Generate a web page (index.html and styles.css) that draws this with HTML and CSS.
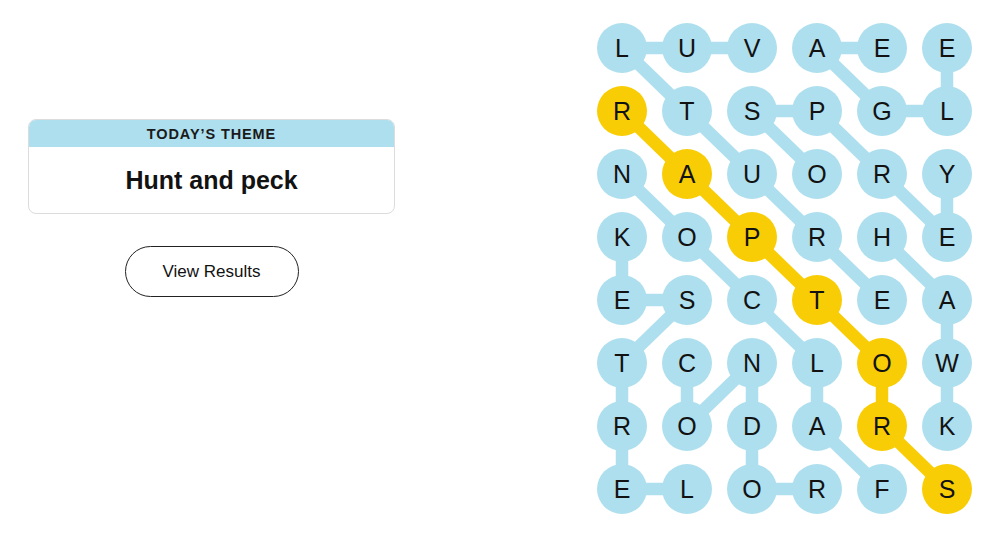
FILE: index.html
```html
<!DOCTYPE html>
<html lang="en">
<head>
    <meta charset="UTF-8">
    <meta name="viewport" content="width=device-width, initial-scale=1.0">
    <title>Strands</title>
    <link rel="stylesheet" href="styles.css">
</head>
<body>
    <div class="page">
        <div class="side">
            <div class="theme-card">
                <div class="theme-head">TODAY&rsquo;S THEME</div>
                <div class="theme-body">Hunt and peck</div>
            </div>
            <button class="results-btn">View Results</button>
        </div>

        <svg id="board" class="board" width="375" height="491" viewBox="0 0 375 491"></svg>
    </div>

    <script>
        const letters = [
            'LUVAEE',
            'RTSPGL',
            'NAUORY',
            'KOPRHE',
            'ESCTEA',
            'TCNLOW',
            'RODARK',
            'ELORFS'
        ];

        // found words as paths of [row, col]
        const words = [
            { cells: [[0,2],[0,1],[0,0],[1,1],[2,2],[3,3],[4,4]] },
            { cells: [[0,4],[0,3],[1,4],[1,5],[0,5]] },
            { cells: [[2,3],[1,2],[1,3],[2,4],[3,5],[2,5]] },
            { cells: [[3,4],[4,5],[5,5],[6,5]] },
            { cells: [[7,4],[6,3],[5,3],[4,2],[3,1],[2,0]] },
            { cells: [[3,0],[4,0],[4,1],[5,0],[6,0],[7,0],[7,1]] },
            { cells: [[5,1],[6,1],[5,2],[6,2],[7,2],[7,3]] },
            { cells: [[1,0],[2,1],[3,2],[4,3],[5,4],[6,4],[7,5]], spangram: true }
        ];

        const svg = document.getElementById('board');
        const ns = 'http://www.w3.org/2000/svg';
        const cx = c => 25 + c * 65;
        const cy = r => 25 + r * 63;
        const spanCells = {};

        words.forEach(word => {
            for (let i = 1; i < word.cells.length; i++) {
                const [r1, c1] = word.cells[i - 1];
                const [r2, c2] = word.cells[i];
                const line = document.createElementNS(ns, 'line');
                line.setAttribute('x1', cx(c1));
                line.setAttribute('y1', cy(r1));
                line.setAttribute('x2', cx(c2));
                line.setAttribute('y2', cy(r2));
                line.setAttribute('class', word.spangram ? 'link span' : 'link');
                svg.appendChild(line);
            }
            if (word.spangram) {
                word.cells.forEach(([r, c]) => { spanCells[r + '-' + c] = true; });
            }
        });

        letters.forEach((row, r) => {
            row.split('').forEach((ch, c) => {
                const dot = document.createElementNS(ns, 'circle');
                dot.setAttribute('cx', cx(c));
                dot.setAttribute('cy', cy(r));
                dot.setAttribute('r', 25);
                dot.setAttribute('class', spanCells[r + '-' + c] ? 'dot span' : 'dot');
                svg.appendChild(dot);

                const txt = document.createElementNS(ns, 'text');
                txt.setAttribute('x', cx(c));
                txt.setAttribute('y', cy(r) + 9);
                txt.setAttribute('class', 'letter');
                txt.textContent = ch;
                svg.appendChild(txt);
            });
        });
    </script>
</body>
</html>
```

FILE: styles.css
```css
body {
    margin: 0;
    font-family: "Liberation Sans", Arial, sans-serif;
    background-color: #ffffff;
    color: #000;
}

.page {
    display: flex;
    align-items: flex-start;
    gap: 202px;
    padding: 23px 0 0 28px;
}

.side {
    width: 367px;
    padding-top: 96px;
    display: flex;
    flex-direction: column;
    align-items: center;
}

.theme-card {
    width: 100%;
    box-sizing: border-box;
    border: 1px solid #dcdcdc;
    border-radius: 8px;
    overflow: hidden;
}

.theme-head {
    height: 27px;
    line-height: 28px;
    background-color: #aedfee;
    text-align: center;
    font-size: 14.5px;
    font-weight: bold;
    letter-spacing: 0.9px;
    color: #1a1a1a;
}

.theme-body {
    height: 66px;
    line-height: 66px;
    text-align: center;
    font-size: 25px;
    font-weight: bold;
    color: #121212;
}

.results-btn {
    margin-top: 32px;
    width: 174px;
    height: 51px;
    border: 1px solid #222;
    border-radius: 26px;
    background-color: #fff;
    font-family: "Liberation Sans", Arial, sans-serif;
    font-size: 17px;
    color: #121212;
    cursor: pointer;
}

.board {
    display: block;
    flex-shrink: 0;
}

.link {
    stroke: #aedfee;
    stroke-width: 12.5;
}

.link.span {
    stroke: #f8cd05;
}

.dot {
    fill: #aedfee;
}

.dot.span {
    fill: #f8cd05;
}

.letter {
    font-family: "Liberation Sans", Arial, sans-serif;
    font-size: 25px;
    text-anchor: middle;
    fill: #121212;
}
```
